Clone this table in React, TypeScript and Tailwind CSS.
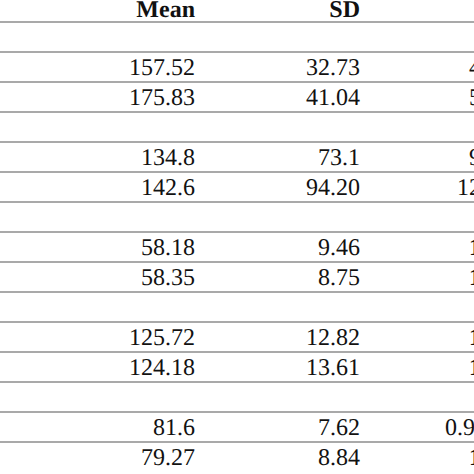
type Row = { mean?: string; sd?: string; third?: string; bold?: boolean };

const rows: Row[] = [
  {},
  { mean: "157.52", sd: "32.73", third: "41.25" },
  { mean: "175.83", sd: "41.04", third: "53.08" },
  {},
  { mean: "134.8", sd: "73.1", third: "96.41" },
  { mean: "142.6", sd: "94.20", third: "127.36" },
  {},
  { mean: "58.18", sd: "9.46", third: "14.32", bold: true },
  { mean: "58.35", sd: "8.75", third: "15.07", bold: true },
  {},
  { mean: "125.72", sd: "12.82", third: "13.55", bold: true },
  { mean: "124.18", sd: "13.61", third: "12.94", bold: true },
  {},
  { mean: "81.6", sd: "7.62", third: "0.9124*" },
  { mean: "79.27", sd: "8.84", third: "16.02", bold: true },
];

export default function App() {
  return (
    <div className="w-[474px] h-[474px] overflow-hidden bg-white text-[#111] font-['Liberation_Serif','Times_New_Roman',serif] [text-rendering:geometricPrecision] antialiased">
      <div className="w-[560px] text-[24px]">
        {/* Header */}
        <div className="flex h-[24px] border-b-2 border-[#a9a9a9] font-bold leading-[22px] -mt-[1px]">
          <div className="w-[120px]" />
          <div className="w-[75px] text-right">Mean</div>
          <div className="w-[165px] text-right">SD</div>
          <div className="w-[163px]" />
        </div>

        {rows.map((r, i) => (
          <div
            key={i}
            className={`flex h-[30px] ${i < rows.length - 1 ? "border-b-2 border-[#a9a9a9]" : ""} pt-[3px] leading-[25px] whitespace-nowrap`}
          >
            <div className="w-[120px]" />
            <div className="w-[75px] text-right">{r.mean}</div>
            <div className="w-[165px] text-right">{r.sd}</div>
            <div className={`w-[163px] text-right ${r.bold ? "font-bold" : ""}`}>{r.third}</div>
          </div>
        ))}
      </div>
    </div>
  );
}
